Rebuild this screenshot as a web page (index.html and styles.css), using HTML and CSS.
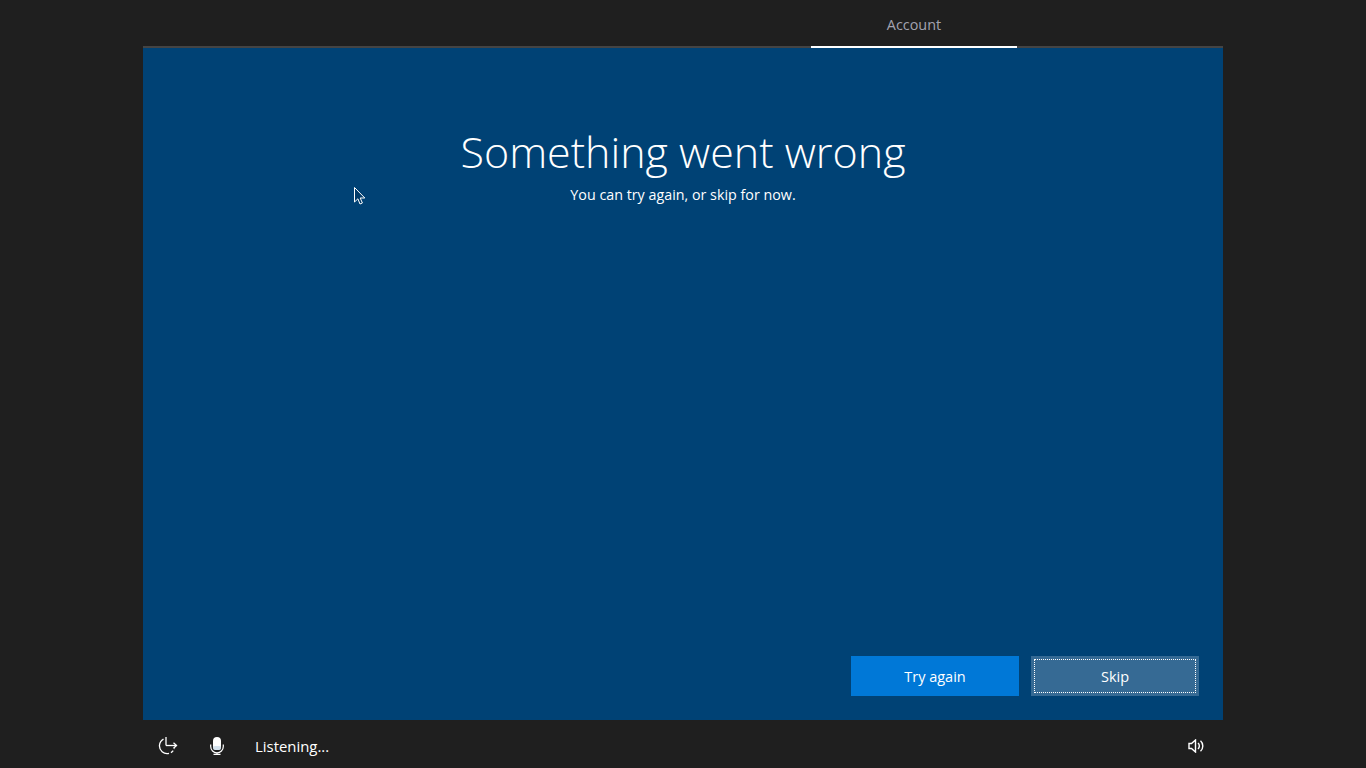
FILE: index.html
```
<!DOCTYPE html>
<html lang="en">
<head>
<meta charset="utf-8">
<title>Something went wrong</title>
<link rel="stylesheet" href="styles.css">
</head>
<body>
<div class="frame">
  <nav class="steps">
    <div class="step">Account</div>
  </nav>
  <main class="panel">
    <div class="message">
      <h1 class="title">Something went wrong</h1>
      <p class="subtitle">You can try again, or skip for now.</p>
    </div>
    <div class="actions">
      <button class="btn btn-primary">Try again</button>
      <button class="btn btn-secondary"><span class="focus">Skip</span></button>
    </div>
    <svg class="cursor" width="12" height="19" viewBox="0 0 12 19">
      <path d="M.5.5V15l3.4-3.2L6 17l2.4-1-2.200-5h4.600z" fill="#003a68" stroke="#fff" stroke-width="1"/>
    </svg>
  </main>
  <footer class="bar">
    <div class="bar-left">
      <svg class="icon ease" width="20" height="18" viewBox="0 0 20 18" fill="none" stroke="#fff" stroke-width="1.300">
        <path d="M5.500 2.100A7.700 7.700 0 1 0 16.400 11.500" stroke-dasharray="22 2 3 2 30"/>
        <path d="M8 0V8.500"/>
        <path d="M8 8.500H18.500"/>
        <path d="M15.500 5.800l3 2.700-3 2.700"/>
      </svg>
      <svg class="icon mic" width="14" height="18" viewBox="0 0 14 18">
        <rect x="3" y="0" width="8" height="13" rx="4" fill="#fff"/>
        <rect x="3" y="9" width="8" height="4" rx="2" fill="#d5e3ef"/>
        <path d="M.7 7.500v2a6.300 6.300 0 0 0 12.600 0v-2M7 15.800v1.700M3.500 17.400h7" fill="none" stroke="#fff" stroke-width="1.200"/>
      </svg>
      <span class="status">Listening...</span>
    </div>
    <svg class="icon volume" width="17" height="14" viewBox="0 0 17 14" fill="none" stroke="#fff" stroke-width="1.400">
      <path d="M1 4.500h2.500L7.500 1v12L3.500 9.500H1z"/>
      <path d="M10 4a4 4 0 0 1 0 6M12.500 1.800a7 7 0 0 1 0 10.400"/>
    </svg>
  </footer>
</div>
</body>
</html>
```
FILE: styles.css
```
* { box-sizing: border-box; }
html, body { margin: 0; height: 100%; }
body {
  background: #1f1f1f;
  color: #fff;
  font-family: "Open Sans", "Noto Sans", sans-serif;
  overflow: hidden;
}
.frame {
  width: 1080px;
  height: 768px;
  margin-left: 143px;
  display: flex;
  flex-direction: column;
}
.steps {
  height: 48px;
  flex: none;
  display: flex;
  justify-content: flex-end;
  padding-right: 206px;
  border-bottom: 2px solid #444;
}
.step {
  width: 206px;
  height: 48px;
  border-bottom: 2px solid #fff;
  text-align: center;
  font-size: 14.400px;
  line-height: 50px;
  color: #a3a3b0;
}
.panel {
  position: relative;
  flex: 1;
  background: #004275;
  display: flex;
  flex-direction: column;
  justify-content: space-between;
  padding: 76px 24px 24px;
}
.message { text-align: center; }
.title {
  margin: 0;
  font-size: 43px;
  font-weight: 300;
  line-height: 56px;
}
.subtitle {
  margin: 4px 0 0;
  font-size: 14.300px;
  line-height: 22px;
}
.actions {
  display: flex;
  justify-content: flex-end;
  gap: 12px;
}
.btn {
  width: 168px;
  height: 40px;
  border: 0;
  padding: 3px;
  color: #fff;
  font: inherit;
  font-size: 14.500px;
}
.btn-primary { background: #0078d7; }
.btn-secondary { background: #366a94; }
.focus {
  display: block;
  height: 100%;
  line-height: 33px;
  border: 1px dotted #fff;
}
.cursor {
  position: absolute;
  left: 211px;
  top: 139px;
}
.bar {
  height: 48px;
  flex: none;
  display: flex;
  align-items: center;
  justify-content: space-between;
  padding: 4px 18px 0 15px;
}
.bar-left {
  display: flex;
  align-items: center;
}
.mic { margin-left: 32px; }
.status {
  margin-left: 31px;
  font-size: 14.900px;
}
```
